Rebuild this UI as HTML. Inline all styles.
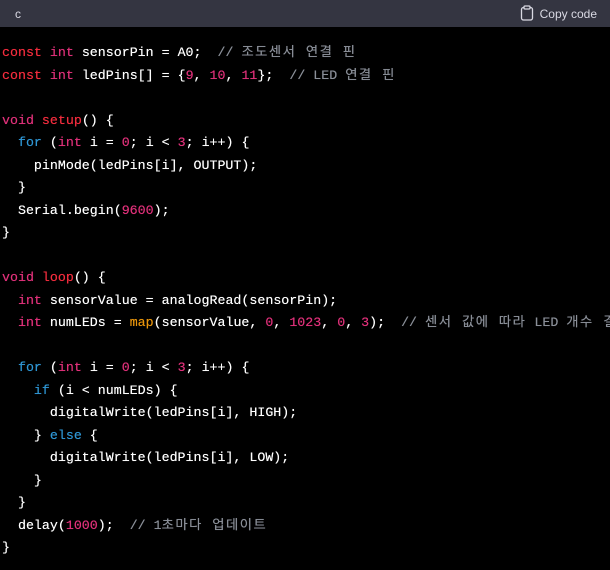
<!DOCTYPE html>
<html><head><meta charset="utf-8"><style>
body{margin:0;background:#000;width:610px;height:570px;overflow:hidden}
.h{height:27px;background:#343541;color:#d9d9e3;font:12px "Liberation Sans",sans-serif;position:relative}
.h .l{position:absolute;left:15px;top:7px}
.h .r{position:absolute;right:13px;top:7px}
.h svg{position:absolute;right:76px;top:5px}
pre{margin:0;padding:15px 0 0 2px;font:13.3px/22.5px "Liberation Mono","Noto Sans CJK KR",monospace;color:#fff;white-space:pre;text-shadow:0 0 0.4px currentColor}
.k{color:#f22c3d}.t{color:#df3079}.n{color:#df3079}.f{color:#f22c3d}.b{color:#2e95d3}.o{color:#e9950c}.c{color:#8a8f98}
.ko{letter-spacing:1.5px}
</style></head><body>
<div class="h"><span class="l">c</span><svg width="14" height="16" viewBox="0 0 14 16" fill="none" stroke="#d9d9e3" stroke-width="1.3"><rect x="1.5" y="2.5" width="11" height="12.5" rx="2"/><rect x="4" y="1" width="6" height="3" rx="1" fill="#343541"/></svg><span class="r">Copy code</span></div>
<pre><span class="k">const</span> <span class="t">int</span> sensorPin = A0;  <span class="c">// <span class="ko">조도센서 연결 핀</span></span>
<span class="k">const</span> <span class="t">int</span> ledPins[] = {<span class="n">9</span>, <span class="n">10</span>, <span class="n">11</span>};  <span class="c">// LED <span class="ko">연결 핀</span></span>

<span class="t">void</span> <span class="f">setup</span>() {
  <span class="b">for</span> (<span class="t">int</span> i = <span class="n">0</span>; i &lt; <span class="n">3</span>; i++) {
    pinMode(ledPins[i], OUTPUT);
  }
  Serial.begin(<span class="n">9600</span>);
}

<span class="t">void</span> <span class="f">loop</span>() {
  <span class="t">int</span> sensorValue = analogRead(sensorPin);
  <span class="t">int</span> numLEDs = <span class="o">map</span>(sensorValue, <span class="n">0</span>, <span class="n">1023</span>, <span class="n">0</span>, <span class="n">3</span>);  <span class="c">// <span class="ko">센서 값에 따라</span> LED <span class="ko">개수 결정</span></span>

  <span class="b">for</span> (<span class="t">int</span> i = <span class="n">0</span>; i &lt; <span class="n">3</span>; i++) {
    <span class="b">if</span> (i &lt; numLEDs) {
      digitalWrite(ledPins[i], HIGH);
    } <span class="b">else</span> {
      digitalWrite(ledPins[i], LOW);
    }
  }
  delay(<span class="n">1000</span>);  <span class="c">// 1<span class="ko">초마다 업데이트</span></span>
}</pre>
</body></html>
